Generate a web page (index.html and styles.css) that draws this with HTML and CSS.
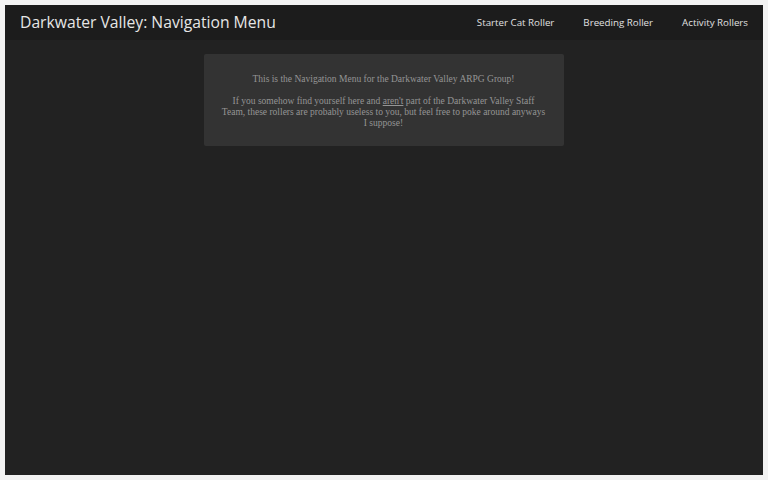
FILE: index.html
```html
<!DOCTYPE html>
<html>
<head>
<meta charset="utf-8">
<link rel="stylesheet" href="styles.css">
</head>
<body>
<div class="app">
  <header class="topbar">
    <div class="brand">Darkwater Valley: Navigation Menu</div>
    <nav class="nav">
      <a href="#">Starter Cat Roller</a>
      <a href="#">Breeding Roller</a>
      <a href="#">Activity Rollers</a>
    </nav>
  </header>
  <main class="content">
    <div class="card">
      <p>This is the Navigation Menu for the Darkwater Valley ARPG Group!</p>
      <p>If you somehow find yourself here and <u>aren't</u> part of the Darkwater Valley Staff Team, these rollers are probably useless to you, but feel free to poke around anyways I suppose!</p>
    </div>
  </main>
</div>
</body>
</html>
```
FILE: styles.css
```css
html, body {
  margin: 0;
  padding: 0;
  background: #f3f3f3;
}
body {
  padding: 5px;
  height: 480px;
  box-sizing: border-box;
}
.app {
  height: 470px;
  background: #222222;
  display: flex;
  flex-direction: column;
}
.topbar {
  height: 35px;
  background: #1c1c1c;
  display: flex;
  align-items: center;
  justify-content: space-between;
  padding: 0 15px;
  font-family: "Open Sans", sans-serif;
}
.brand {
  color: #e6e6e6;
  font-size: 15.7px;
  padding-bottom: 1px;
}
.nav {
  display: flex;
  gap: 29px;
}
.nav a {
  color: #e0e0e0;
  text-decoration: none;
  font-size: 9.75px;
}
.content {
  flex: 1;
  display: flex;
  justify-content: center;
  align-items: flex-start;
  padding-top: 14px;
  padding-right: 1px;
}
.card {
  width: 324px;
  background: #333333;
  border-radius: 2px;
  padding: 10px 18px 7px;
  text-align: center;
  font-family: "Liberation Serif", serif;
  font-size: 9.5px;
  line-height: 11px;
  color: #959595;
}
.card p {
  margin: 10px 0;
}
.card p + p {
  margin-top: 11px;
}
```
